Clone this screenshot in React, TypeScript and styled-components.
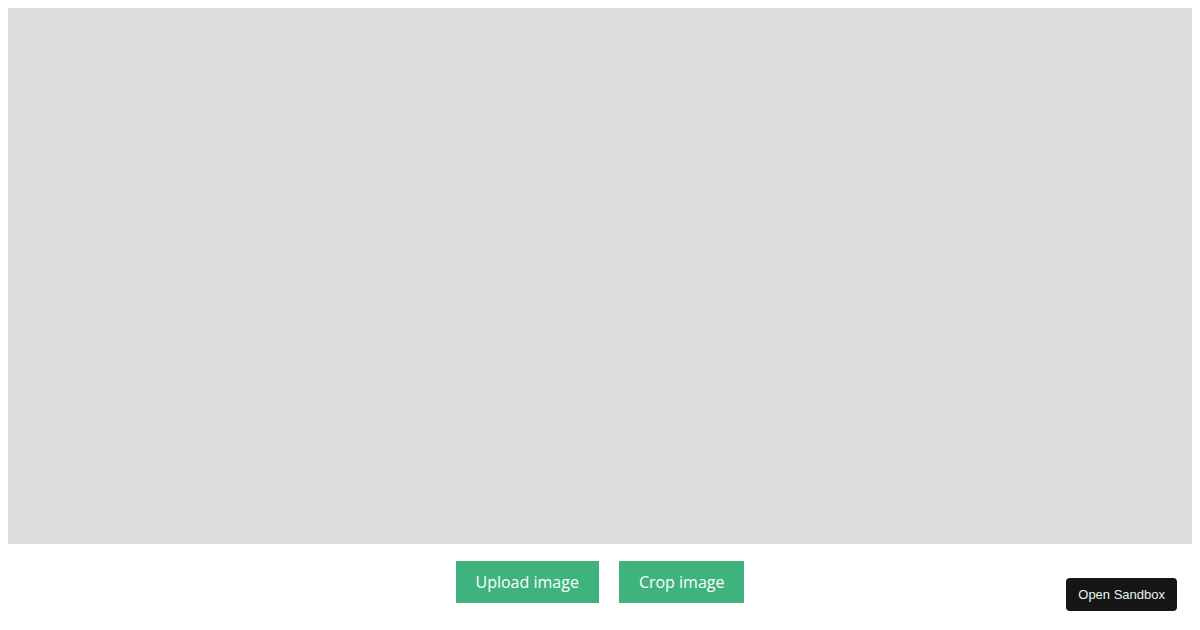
import React from "react";
import styled, { createGlobalStyle } from "styled-components";

const GlobalStyle = createGlobalStyle`
    body {
        margin: 8px;
        background: #ffffff;
        font-family: "Open Sans", sans-serif;
    }
`;

const Canvas = styled.div`
    height: 536px;
    background-color: #dddddd;
`;

const Actions = styled.div`
    display: flex;
    justify-content: center;
    gap: 20px;
    margin-top: 17px;
`;

const ActionButton = styled.button`
    height: 42px;
    padding: 0 20px;
    border: none;
    background-color: #3eb37e;
    color: #ffffff;
    font-family: "Open Sans", sans-serif;
    font-size: 16px;
    cursor: pointer;
`;

const SandboxLink = styled.a`
    position: fixed;
    right: 23px;
    bottom: 19px;
    display: flex;
    align-items: center;
    height: 33px;
    padding: 0 12px;
    border-radius: 4px;
    background-color: #151515;
    color: #e6f5ee;
    font-family: "Liberation Sans", Arial, sans-serif;
    font-size: 13px;
    text-decoration: none;
`;

const App: React.FC = () => {
    return (
        <>
            <GlobalStyle />
            <Canvas />
            <Actions>
                <ActionButton>Upload image</ActionButton>
                <ActionButton>Crop image</ActionButton>
            </Actions>
            <SandboxLink href="#">Open Sandbox</SandboxLink>
        </>
    );
};

export default App;
